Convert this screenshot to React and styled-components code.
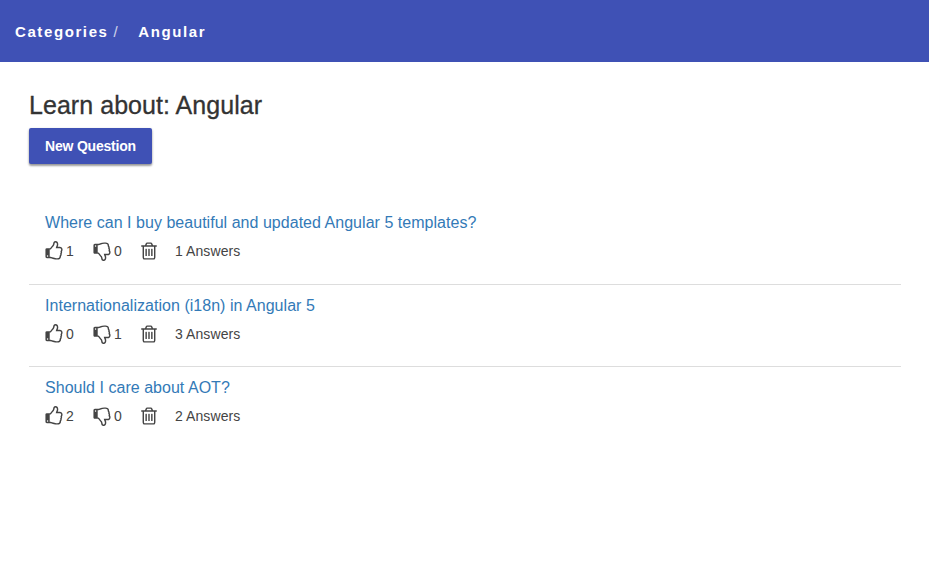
import styled, { createGlobalStyle } from 'styled-components'

const GlobalStyle = createGlobalStyle`
	body {
		margin: 0;
		background: #fff;
		font-family: 'Liberation Sans', Arial, sans-serif;
		font-size: 14px;
		color: #333;
	}
`

const Navbar = styled.nav`
	height: 62px;
	background: #3f51b5;
	display: flex;
	align-items: center;
	padding: 0 15px;
	color: #fff;
	font-size: 15px;
	font-weight: 700;
	letter-spacing: 1.6px;
`

const Crumb = styled.span``

const Slash = styled.span`
	font-weight: 400;
	opacity: 0.75;
	margin-left: 5px;
	margin-right: 19px;
`

const Main = styled.main`
	padding: 29px 28px 0 29px;
`

const Title = styled.h1`
	margin: 0;
	font-size: 25px;
	line-height: 28px;
	font-weight: 400;
	letter-spacing: 0.05px;
	color: #333;
	-webkit-text-stroke: 0.3px #333;
`

const NewButton = styled.button`
	display: block;
	margin: 9px 0 0;
	width: 123px;
	height: 36px;
	padding: 0;
	border: 0;
	border-radius: 2px;
	background: #3f51b5;
	color: #fff;
	font-family: inherit;
	font-size: 14px;
	font-weight: 700;
	letter-spacing: -0.2px;
	box-shadow: 0 2px 2px 0 rgba(0, 0, 0, 0.3), 0 1px 3px 0 rgba(0, 0, 0, 0.2);
	cursor: pointer;
`

const QuestionList = styled.ul`
	list-style: none;
	margin: 37px 0 0;
	padding: 0;
`

const Question = styled.li`
	padding: 11px 16px 0;
	height: 82px;
	box-sizing: border-box;
	border-bottom: 1px solid #ddd;

	&:first-child {
		height: 84px;
		padding-top: 12px;
	}
	&:last-child {
		border-bottom: 0;
	}
`

const QuestionLink = styled.a`
	display: block;
	font-size: 16px;
	line-height: 20px;
	letter-spacing: 0.03px;
	color: #337ab7;
	text-decoration: none;
`

const Meta = styled.div`
	display: flex;
	align-items: center;
	height: 20px;
	margin: 8px 0 0 -1px;
	color: #444;
`

const Stat = styled.span`
	display: flex;
	align-items: center;
	width: ${(props) => props.$width}px;
`

const Count = styled.span`
	margin-left: 2px;
`

const Icon = styled.svg`
	width: 20px;
	height: 20px;
	fill: #444;
	flex: none;
`

const Answers = styled.span`
	letter-spacing: 0.08px;
`

const thumbUp =
	'M384 1344q0-26-19-45t-45-19-45 19-19 45 19 45 45 19 45-19 19-45zm1152-576q0-51-39-89.500t-89-38.500h-352q0-58 48-159.500t48-160.500q0-98-32-145t-128-47q-26 26-38 85t-30.500 125.500-59.500 109.500q-22 23-77 91-4 5-23 30t-31.500 41-34.500 42.500-40 44-38.500 35.500-40 27-35.500 9h-32v640h32q13 0 31.500 3t33 6.500 38 11 35 11.500 35.500 12.500 29 10.500q211 73 342 73h121q192 0 192-167 0-26-5-56 30-16 47.500-52.500t17.500-73.500-18-69q53-50 53-119 0-25-10-55.500t-25-47.500q32-1 53.500-47t21.500-81zm128-1q0 89-49 163 9 33 9 69 0 77-38 144 3 21 3 43 0 101-60 178 1 139-85 219.500t-227 80.500h-129q-96 0-189.500-22.500t-216.500-65.500q-116-40-138-40h-288q-53 0-90.500-37.500t-37.500-90.500v-640q0-53 37.500-90.500t90.500-37.500h274q36-24 137-155 58-75 107-128 24-25 35.500-85.500t30.500-126.500 62-108q39-37 90-37 84 0 151 32.500t102 101.500 35 186q0 93-48 192h176q104 0 180 76t76 179z'
const thumbDown =
	'M384 448q0-26-19-45t-45-19-45 19-19 45 19 45 45 19 45-19 19-45zm1152 576q0-35-21.500-81t-53.500-47q15-17 25-47.500t10-55.500q0-69-53-119 18-32 18-69t-17.500-73.500-47.500-52.500q5-30 5-56 0-85-49-126t-136-41h-128q-131 0-342 73-5 2-29 10.500t-35.500 12.500-35 11.500-38 11-33 6.500-31.500 3h-32v640h32q16 0 35.500 9t40 27 38.500 35.500 40 44 34.500 42.500 31.500 41 23 30q55 68 77 91 41 43 59.500 109.500t30.500 125.500 38 85q96 0 128-47t32-145q0-59-48-160.500t-48-159.500h352q50 0 89-38.500t39-89.500zm128 1q0 103-76 179t-180 76h-176q48 99 48 192 0 118-35 186-35 69-102 101.500t-151 32.500q-51 0-90-37-34-33-54-82t-25.500-90.500-17.500-84.500-31-64q-48-50-107-127-101-131-137-155h-274q-53 0-90.500-37.500t-37.500-90.500v-640q0-53 37.500-90.500t90.500-37.500h288q22 0 138-40 128-44 223-66t200-22h112q140 0 226.500 79t85.500 216v5q60 77 60 178 0 22-3 43 38 67 38 144 0 36-9 69 49 73 49 163z'
const trash =
	'M704 736v576q0 14-9 23t-23 9h-64q-14 0-23-9t-9-23v-576q0-14 9-23t23-9h64q14 0 23 9t9 23zm256 0v576q0 14-9 23t-23 9h-64q-14 0-23-9t-9-23v-576q0-14 9-23t23-9h64q14 0 23 9t9 23zm256 0v576q0 14-9 23t-23 9h-64q-14 0-23-9t-9-23v-576q0-14 9-23t23-9h64q14 0 23 9t9 23zm128 724v-948h-896v948q0 22 7 40.500t14.500 27 10.500 8.500h832q3 0 10.500-8.500t14.500-27 7-40.500zm-672-1076h448l-48-117q-7-9-17-11h-317q-10 2-17 11zm928 32v64q0 14-9 23t-23 9h-96v948q0 83-47 143.500t-113 60.500h-832q-66 0-113-58.500t-47-141.500v-952h-96q-14 0-23-9t-9-23v-64q0-14 9-23t23-9h309l70-167q15-37 54-63t79-26h320q40 0 79 26t54 63l70 167h309q14 0 23 9t9 23z'

const questions = [
	{ title: 'Where can I buy beautiful and updated Angular 5 templates?', up: 1, down: 0, answers: 1 },
	{ title: 'Internationalization (i18n) in Angular 5', up: 0, down: 1, answers: 3 },
	{ title: 'Should I care about AOT?', up: 2, down: 0, answers: 2 },
]

function FaIcon({ d }) {
	return (
		<Icon viewBox='0 0 1792 1792' aria-hidden='true'>
			<path d={d} />
		</Icon>
	)
}

export default function App() {
	return (
		<>
			<GlobalStyle />
			<Navbar>
				<Crumb>Categories</Crumb>
				<Slash>/</Slash>
				<Crumb>Angular</Crumb>
			</Navbar>
			<Main>
				<Title>Learn about: Angular</Title>
				<NewButton>New Question</NewButton>
				<QuestionList>
					{questions.map((q) => (
						<Question key={q.title}>
							<QuestionLink href='#'>{q.title}</QuestionLink>
							<Meta>
								<Stat $width={48}>
									<FaIcon d={thumbUp} />
									<Count>{q.up}</Count>
								</Stat>
								<Stat $width={47}>
									<FaIcon d={thumbDown} />
									<Count>{q.down}</Count>
								</Stat>
								<Stat $width={36}>
									<FaIcon d={trash} />
								</Stat>
								<Answers>{q.answers} Answers</Answers>
							</Meta>
						</Question>
					))}
				</QuestionList>
			</Main>
		</>
	)
}
